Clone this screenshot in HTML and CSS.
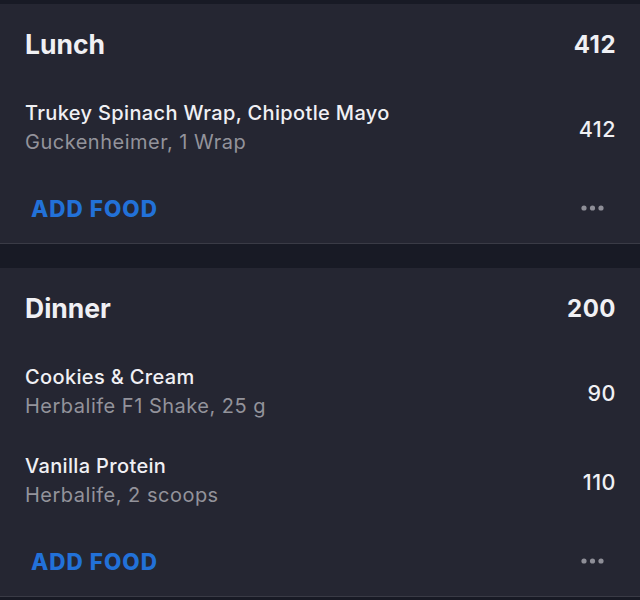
FILE: index.html
```html
<!DOCTYPE html>
<html>
<head>
<meta charset="utf-8">
<link rel="stylesheet" href="styles.css">
</head>
<body>
<div class="page">
  <section class="card">
    <div class="head">
      <span class="title">Lunch</span>
      <span class="total">412</span>
    </div>
    <div class="item">
      <div class="info">
        <div class="name">Trukey Spinach Wrap, Chipotle Mayo</div>
        <div class="sub">Guckenheimer, 1 Wrap</div>
      </div>
      <span class="cal">412</span>
    </div>
    <div class="foot">
      <span class="add">ADD FOOD</span>
      <svg class="more" width="24" height="6" viewBox="0 0 24 6"><circle cx="3" cy="3" r="2.6"/><circle cx="11.5" cy="3" r="2.6"/><circle cx="20" cy="3" r="2.6"/></svg>
    </div>
  </section>
  <section class="card">
    <div class="head">
      <span class="title">Dinner</span>
      <span class="total">200</span>
    </div>
    <div class="item">
      <div class="info">
        <div class="name">Cookies &amp; Cream</div>
        <div class="sub">Herbalife F1 Shake, 25 g</div>
      </div>
      <span class="cal">90</span>
    </div>
    <div class="item">
      <div class="info">
        <div class="name">Vanilla Protein</div>
        <div class="sub">Herbalife, 2 scoops</div>
      </div>
      <span class="cal">110</span>
    </div>
    <div class="foot">
      <span class="add">ADD FOOD</span>
      <svg class="more" width="24" height="6" viewBox="0 0 24 6"><circle cx="3" cy="3" r="2.6"/><circle cx="11.5" cy="3" r="2.6"/><circle cx="20" cy="3" r="2.6"/></svg>
    </div>
  </section>
</div>
</body>
</html>
```

FILE: styles.css
```css
html, body {
  margin: 0;
  padding: 0;
  background: #181a25;
}
body {
  font-family: Inter, "Noto Sans", sans-serif;
  color: #f0f0f4;
  width: 640px;
  height: 600px;
  overflow: hidden;
}
.page {
  padding-top: 4px;
  display: flex;
  flex-direction: column;
  gap: 24px;
}
.card {
  background: #252632;
  border-bottom: 1px solid #3a3b46;
  display: flex;
  flex-direction: column;
}
.head {
  height: 80px;
  display: flex;
  align-items: center;
  justify-content: space-between;
  padding: 0 24px 0 25px;
}
.title {
  font-size: 26.5px;
  font-weight: 700;
}
.total {
  font-size: 24px;
  font-weight: 700;
  letter-spacing: 0.5px;
}
.item {
  height: 89px;
  display: flex;
  align-items: center;
  justify-content: space-between;
  padding: 0 24px 2px 25px;
  box-sizing: border-box;
}
.cal {
  margin-top: 2px;
}
.name {
  font-size: 20px;
  line-height: 29px;
  font-weight: 500;
  letter-spacing: 0.35px;
  color: #f0f0f4;
}
.sub {
  font-size: 20px;
  line-height: 29px;
  letter-spacing: 0.5px;
  color: #93939b;
}
.cal {
  font-size: 21.5px;
  font-weight: 500;
  letter-spacing: 0.5px;
}
.foot {
  height: 70px;
  display: flex;
  align-items: center;
  justify-content: space-between;
  padding: 0 35px 0 31px;
}
.add {
  font-size: 22.5px;
  font-weight: 800;
  color: #2271d8;
  letter-spacing: 1px;
}
.more {
  fill: #8e8e97;
  display: block;
}
```
